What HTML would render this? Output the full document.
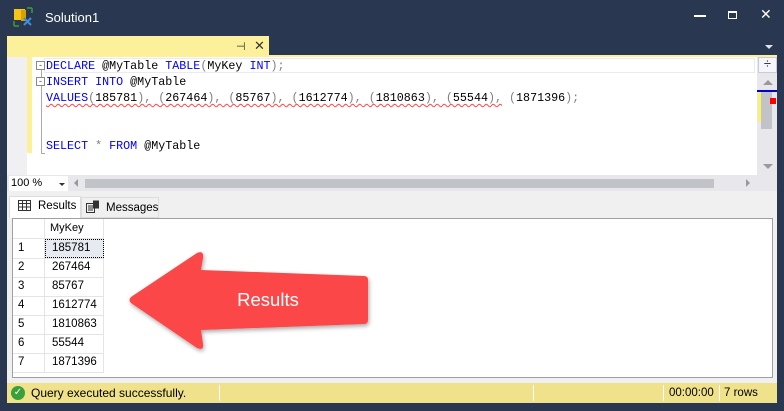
<!DOCTYPE html>
<html><head><style>
*{margin:0;padding:0;box-sizing:border-box}
body{width:784px;height:411px;background:#293850;position:relative;overflow:hidden;font-family:"Liberation Sans",sans-serif}
.a{position:absolute}
.code{font-family:"Liberation Mono",monospace;font-size:11.7px;white-space:pre;position:absolute;left:46px;line-height:16px;color:#000}
.k{color:#0000ff}.g{color:#808080}.m{color:#ff00ff}
.wav{text-decoration:underline wavy #f44;text-underline-offset:2px;text-decoration-thickness:1px}
.cell{position:absolute;font-size:11.5px;color:#000}
</style></head><body>
<svg class="a" style="left:13px;top:7px" width="20" height="20"><rect x="1" y="2" width="11" height="11" fill="#f5c518"/><rect x="8" y="3" width="5" height="11" fill="#d8a000"/><path d="M1 19v-5M1 19h5M19 1v5M19 1h-5" stroke="#3c9a3c" stroke-width="1.5" fill="none"/><path d="M11 11l7 7M18 11l-7 7" stroke="#3b8fe0" stroke-width="2"/></svg>
<div class="a" style="left:45px;top:10px;color:#fff;font-size:13px">Solution1</div>
<div class="a" style="left:694px;top:15px;width:12px;height:2px;background:#fff"></div>
<div class="a" style="left:728px;top:11px;width:9px;height:8px;border:1px solid #fff;border-top-width:2px"></div>
<div class="a" style="left:760px;top:6px;color:#fff;font-size:14px">✕</div>
<div class="a" style="left:765px;top:45px;width:0;height:0;border-left:4px solid transparent;border-right:4px solid transparent;border-top:4px solid #dfe3ea"></div>
<div class="a" style="left:7px;top:36px;width:262px;height:20px;background:#fdf09a"></div>
<div class="a" style="left:236px;top:40px;font-size:11px;color:#333">⊣</div>
<div class="a" style="left:254px;top:38px;font-size:13px;color:#333">✕</div>
<div class="a" style="left:7px;top:55px;width:770px;height:2px;background:#fdf09a"></div>
<div class="a" style="left:7px;top:57px;width:770px;height:118px;background:#fff"></div>
<div class="a" style="left:7px;top:57px;width:20px;height:118px;background:#f0f0f3"></div>
<div class="a" style="left:27px;top:57px;width:5px;height:96px;background:#fdf09a"></div>
<div class="a" style="left:44px;top:58px;width:711px;height:15px;border:1px solid #eaeaf2"></div>
<div class="a" style="left:41px;top:74px;width:1px;height:80px;background:#aaa"></div>
<div class="a" style="left:36px;top:61px;width:9px;height:9px;border:1px solid #888;background:#fff;font-size:9px;line-height:6px;text-align:center;color:#444">-</div>
<div class="a" style="left:36px;top:77px;width:9px;height:9px;border:1px solid #888;background:#fff;font-size:9px;line-height:6px;text-align:center;color:#444">-</div>
<div class="a" style="left:41px;top:70px;width:1px;height:6px;background:#aaa"></div>
<div class="a" style="left:41px;top:153px;width:4px;height:1px;background:#aaa"></div>
<div class="code" style="top:58px"><span class="k">DECLARE</span> @MyTable <span class="k">TABLE</span><span class="g">(</span>MyKey <span class="k">INT</span><span class="g">);</span></div>
<div class="code" style="top:74px"><span class="k">INSERT INTO</span> @MyTable</div>
<div class="code" style="top:90px"><span class="wav"><span class="k">VALUES</span><span class="g">(</span>185781<span class="g">),</span> <span class="g">(</span>267464<span class="g">),</span> <span class="g">(</span>85767<span class="g">),</span> <span class="g">(</span>1612774<span class="g">),</span> <span class="g">(</span>1810863<span class="g">),</span> <span class="g">(</span>55544<span class="g">),</span></span> <span class="g">(</span>1871396<span class="g">);</span></div>
<div class="code" style="top:138px"><span class="k">SELECT</span> <span class="g">*</span> <span class="k">FROM</span> @MyTable</div>
<div class="a" style="left:757px;top:57px;width:20px;height:118px;background:#e8e8ec"></div>
<div class="a" style="left:758px;top:57px;width:19px;height:16px;background:#f4f6fb;border:1px solid #c8ccd8;font-size:13px;line-height:12px;text-align:center;color:#222">÷</div>
<div class="a" style="left:763px;top:80px;border-left:5px solid transparent;border-right:5px solid transparent;border-bottom:5px solid #999"></div>
<div class="a" style="left:757px;top:90px;width:20px;height:2px;background:#0000c8"></div>
<div class="a" style="left:761px;top:92px;width:11px;height:37px;background:#c2c3c9"></div>
<div class="a" style="left:758px;top:92px;width:3px;height:30px;background:#fdf06a"></div>
<div class="a" style="left:770px;top:98px;width:6px;height:6px;background:#f00"></div>
<div class="a" style="left:763px;top:164px;border-left:5px solid transparent;border-right:5px solid transparent;border-top:5px solid #999"></div>
<div class="a" style="left:7px;top:175px;width:770px;height:16px;background:#e8e8ec"></div>
<div class="a" style="left:9px;top:176px;width:59px;height:15px;background:#fff;font-size:11px;padding:1px 0 0 2px">100 %</div>
<div class="a" style="left:59px;top:183px;border-left:3px solid transparent;border-right:3px solid transparent;border-top:3px solid #333"></div>
<div class="a" style="left:74px;top:179px;border-top:4px solid transparent;border-bottom:4px solid transparent;border-right:4px solid #999"></div>
<div class="a" style="left:85px;top:179px;width:629px;height:9px;background:#c2c3c9"></div>
<div class="a" style="left:746px;top:179px;border-top:4px solid transparent;border-bottom:4px solid transparent;border-left:4px solid #999"></div>
<div class="a" style="left:7px;top:191px;width:770px;height:192px;background:#f0f0f0"></div>
<div class="a" style="left:9px;top:196px;width:72px;height:22px;background:#fff;border:1px solid #ddd;border-bottom:none"></div>
<svg class="a" style="left:18px;top:200px" width="13" height="11"><rect x=".5" y=".5" width="12" height="10" fill="none" stroke="#333"/><path d="M.5 3.5h12M.5 7h12M4.5 .5v10M8.5 .5v10" stroke="#333"/></svg>
<div class="a" style="left:38px;top:200px;font-size:11.5px">Results</div>
<div class="a" style="left:81px;top:197px;width:78px;height:21px;background:#f0f0f0;border:1px solid #ddd"></div>
<svg class="a" style="left:86px;top:200px" width="14" height="13"><rect x=".5" y="3.5" width="8" height="9" fill="none" stroke="#333"/><path d="M2 6h5M2 8h5M2 10h5" stroke="#333"/><rect x="7" y=".5" width="6" height="8" fill="#333"/></svg>
<div class="a" style="left:106px;top:202px;font-size:11.5px">Messages</div>
<div class="a" style="left:12px;top:218px;width:761px;height:160px;background:#fff;border:1px solid #a0a0a0"></div>
<div class="a" style="left:13px;top:219px;width:32px;height:153px;border-right:1px solid #e4e4e4"></div>
<div class="a" style="left:44px;top:219px;width:60px;height:153px;border-right:1px solid #e4e4e4"></div>
<div class="cell" style="left:50px;top:222px;font-size:11px">MyKey</div>
<div class="a" style="left:13px;top:238px;width:91px;height:1px;background:#e4e4e4"></div>
<div class="a" style="left:45px;top:239px;width:59px;height:19px;background:#e6ebf1;border:1px dotted #000"></div>
<div id="rows"></div>
<svg class="a" style="left:0;top:0" width="784" height="411">
<defs><filter id="s" x="-10%" y="-10%" width="130%" height="130%"><feDropShadow dx="1" dy="2" stdDeviation="2" flood-color="#000" flood-opacity=".35"/></filter></defs>
<path d="M131 297 L197 253 Q204 250 203 258 L201 270 L364 276 Q368 276 368 280 L368 320 Q368 324 364 324 L201 330 L203 344 Q204 351 197 348 L131 303 Q128 300 131 297Z" fill="#fb4646" filter="url(#s)"/>
<text x="268" y="306" font-family="Liberation Sans" font-size="18.5" fill="#fff" text-anchor="middle">Results</text>
</svg>
<div class="a" style="left:7px;top:383px;width:770px;height:20px;background:#f0e28a"></div>
<div class="a" style="left:11px;top:386px;width:14px;height:14px;border-radius:50%;background:#3aa03a;color:#fff;font-size:10px;text-align:center;line-height:14px">✓</div>
<div class="a" style="left:31px;top:386px;font-size:12px">Query executed successfully.</div>
<div class="a" style="left:219px;top:385px;width:1px;height:16px;background:#fff"></div>
<div class="a" style="left:533px;top:385px;width:1px;height:16px;background:#fff"></div>
<div class="a" style="left:663px;top:385px;width:1px;height:16px;background:#fff"></div>
<div class="a" style="left:719px;top:385px;width:1px;height:16px;background:#fff"></div>
<div class="a" style="left:669px;top:387px;font-size:11.5px">00:00:00</div>
<div class="a" style="left:724px;top:387px;font-size:11.5px">7 rows</div>
<script>
var v=["185781","267464","85767","1612774","1810863","55544","1871396"],h="";
for(var i=0;i<7;i++){var t=239+i*19;h+='<div class="cell" style="left:18px;top:'+(t+3)+'px">'+(i+1)+'</div><div class="cell" style="left:52px;top:'+(t+3)+'px">'+v[i]+'</div><div class="a" style="left:13px;top:'+(t+19)+'px;width:91px;height:1px;background:#e4e4e4"></div>';}
document.getElementById("rows").innerHTML=h;
</script>
</body></html>
